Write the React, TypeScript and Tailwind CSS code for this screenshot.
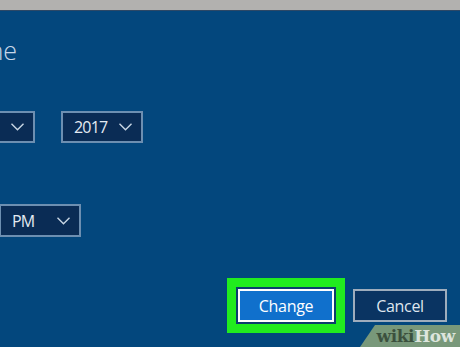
import type { ReactElement } from 'react';

const Chevron = (): ReactElement => (
  <svg width="13" height="8" viewBox="0 0 13 8" fill="none" stroke="#c9d6e4" strokeWidth={1.4}>
    <path d="M0.5 0.8L6.5 6.8L12.5 0.8" />
  </svg>
);

const FONT = "font-['Open_Sans','Noto_Sans',sans-serif]";

function Select({ label, width, className = '' }: { label?: string; width: string; className?: string }) {
  return (
    <div
      className={`${width} ${className} h-[32px] flex items-center justify-between pl-[11px] pr-[9px] bg-[#0a2c55] border-2 border-[#6d8fb1] text-[#e3eaf2] text-[16px] tracking-[-0.8px]`}
    >
      <span className="leading-none">{label}</span>
      <Chevron />
    </div>
  );
}

export default function App() {
  return (
    <div className={`relative w-[460px] h-[347px] overflow-hidden bg-[#03477d] ${FONT}`}>
      <div className="h-[10px] bg-[#b2b1af]" />
      <div className="h-px bg-[#2d4866]" />

      {/* title, cut off on the left */}
      <div className="mt-[24px] w-[17px] flex justify-end whitespace-nowrap">
        <h1 className="text-[25px] leading-[30px] font-light text-[#c7d7e9]">Change date and time</h1>
      </div>

      {/* date row */}
      <div className="mt-[46px] flex gap-[26px]">
        <Select width="w-[110px]" className="-ml-[75px]" />
        <Select label="2017" width="w-[82px]" />
      </div>

      {/* time row */}
      <div className="mt-[61px] flex">
        <Select label="PM" width="w-[82px]" className="-ml-px h-[33px]" />
      </div>

      {/* buttons */}
      <div className="mt-[41px] flex items-center gap-[8px] pl-[227px] text-[16px] tracking-[-0.3px]">
        <div className="bg-[#21ec1f] p-[9px]">
          <div className="border-2 border-[#0b3d6e]">
            <button className="w-[96px] h-[33px] bg-[#1070cc] border-2 border-white text-white leading-none">
              Change
            </button>
          </div>
        </div>
        <button className="w-[94px] h-[33px] bg-[#0a3462] border-2 border-[#9eadbd] text-[#dfe6ee] leading-none">
          Cancel
        </button>
      </div>

      {/* watermark */}
      <div className="absolute right-0 bottom-0 w-[100px] h-[22px] bg-[#78987a] [clip-path:polygon(15px_0,100%_0,100%_100%,0_100%)] flex items-center justify-end pr-[5px]">
        <span className="font-['DejaVu_Serif',serif] font-bold text-[17px] leading-none tracking-[-0.4px]">
          <span className="text-[#3c513e]">wiki</span>
          <span className="text-[#dde5dd]">How</span>
        </span>
      </div>
    </div>
  );
}
